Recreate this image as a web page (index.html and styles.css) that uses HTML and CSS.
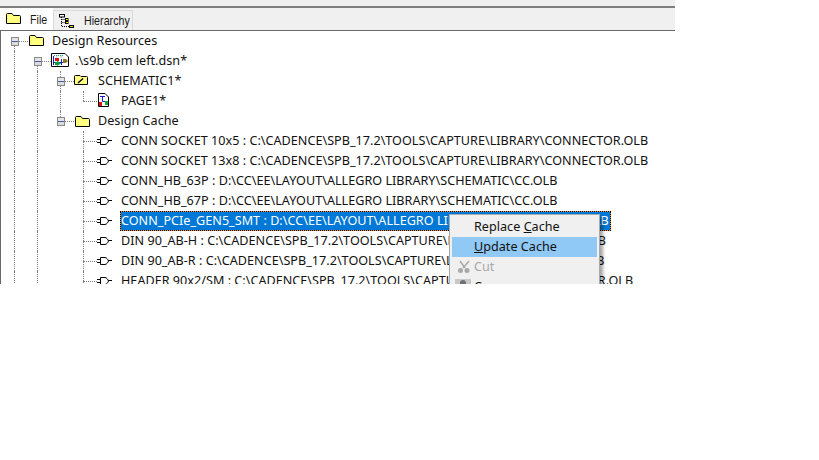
FILE: index.html
```html
<!DOCTYPE html>
<html>
<head>
<meta charset="utf-8">
<title>Design Resources</title>
<link rel="stylesheet" href="styles.css">
</head>
<body>
<svg class="defs" width="0" height="0" aria-hidden="true">
  <defs>
    <symbol id="folder" viewBox="0 0 15 11">
      <path d="M1.500 .500H6L7.500 2.500H13.500Q14.500 2.500 14.500 3.500V10.500H.500V1.500Q.500 .500 1.500 .500Z" fill="#ffff80" stroke="#000"/>
    </symbol>
    <symbol id="gate" viewBox="0 0 15 8">
      <path d="M3.500 .500H8C9.500 .500 11 2.500 11.500 4C11 5.500 9.500 7.500 8 7.500H3.500Z" fill="#fff" stroke="#000"/>
      <path d="M0 2.500H3.500M0 5.500H3.500M11.500 3.500H15" stroke="#000"/>
    </symbol>
  </defs>
</svg>
<div class="app">
  <div class="topstrip"></div>
  <div class="tabs">
    <div class="tab active">
      <svg class="tabicon tabfolder" width="15" height="11"><use href="#folder"/></svg>
      <span class="tablabel">File</span>
    </div>
    <div class="tab">
      <svg class="tabicon" width="15" height="14" viewBox="0 0 15 14">
        <path d="M2.500 3V12.500H10M2.500 5.500H6M2.500 8.500H6" fill="none" stroke="#000" stroke-dasharray="1 1"/>
        <rect x=".5" y=".5" width="5" height="2.500" fill="#fff" stroke="#000"/>
        <rect x="6.500" y="4.500" width="2.500" height="2" fill="#ffe000" stroke="#000"/>
        <rect x="6.500" y="7.500" width="2.500" height="2" fill="#ffe000" stroke="#000"/>
        <rect x="10.500" y="11.500" width="4" height="2" fill="#ffe000" stroke="#000"/>
      </svg>
      <span class="tablabel">Hierarchy</span>
    </div>
  </div>
  <div class="tree">
    <div class="row">
      <div class="c bot h"><i class="box"></i></div>
      <svg class="ic ic-folder" width="15" height="11"><use href="#folder"/></svg>
      <span class="t t1">Design Resources</span>
    </div>
    <div class="row">
      <div class="c v"></div>
      <div class="c bot h"><i class="box"></i></div>
      <svg class="ic ic-dsn" width="18" height="14" viewBox="0 0 18 14">
        <path d="M.500 .500H14L17.500 4V13.500H.500Z" fill="#fff" stroke="#000"/>
        <path d="M3 2.500H12M6 2.500V5M10 2.500V5" stroke="#2a9d8a" stroke-dasharray="1 1"/>
        <path d="M2.500 3V12M10.500 6V12M2 9.500H15" stroke="#1818d8" fill="none"/>
        <rect x="4" y="5" width="4" height="3" fill="#e01010"/>
        <path d="M4 9H6V7.500L10 10.500L6 13V12H4Z" fill="#10a030"/>
        <path d="M12 6H15L17 8L15 10H12Z" fill="#8a7a20"/>
      </svg>
      <span class="t t2">.\s9b cem left.dsn*</span>
    </div>
    <div class="row">
      <div class="c v"></div>
      <div class="c v"></div>
      <div class="c v h"><i class="box"></i></div>
      <svg class="ic ic-sch" width="14" height="10" viewBox="0 0 14 10">
        <path d="M1.500 .500H6L7 1.500H12.500Q13.500 1.500 13.500 2.500V9.500H.500V1.500Q.500 .500 1.500 .500Z" fill="#ffff80" stroke="#000"/>
        <path d="M4 8L9 3.500" stroke="#000" stroke-width="1.400"/>
      </svg>
      <span class="t t3">SCHEMATIC1*</span>
    </div>
    <div class="row">
      <div class="c v"></div>
      <div class="c v"></div>
      <div class="c v"></div>
      <div class="c top h"></div>
      <svg class="ic ic-page" width="11" height="14" viewBox="0 0 11 14">
        <path d="M.500 .500H7L10.500 4V13.500H.500Z" fill="#fff" stroke="#000"/>
        <path d="M2 3.500H7M4.500 3.500V8.500H8" fill="none" stroke="#1818d8"/>
        <rect x="1" y="9" width="3" height="4" fill="#e01010"/>
        <rect x="7" y="8" width="3" height="4" fill="#10b030"/>
      </svg>
      <span class="t t4">PAGE1*</span>
    </div>
    <div class="row">
      <div class="c v"></div>
      <div class="c v"></div>
      <div class="c top h"><i class="box"></i></div>
      <svg class="ic ic-cache" width="15" height="11"><use href="#folder"/></svg>
      <span class="t t5">Design Cache</span>
    </div>
    <div class="row"><div class="c v"></div><div class="c v"></div><div class="c"></div><div class="c v h"></div><svg class="ic ic-gate" width="15" height="8"><use href="#gate"/></svg><span class="t t6">CONN SOCKET 10x5 : C:\CADENCE\SPB_17.2\TOOLS\CAPTURE\LIBRARY\CONNECTOR.OLB</span></div>
    <div class="row"><div class="c v"></div><div class="c v"></div><div class="c"></div><div class="c v h"></div><svg class="ic ic-gate" width="15" height="8"><use href="#gate"/></svg><span class="t t6">CONN SOCKET 13x8 : C:\CADENCE\SPB_17.2\TOOLS\CAPTURE\LIBRARY\CONNECTOR.OLB</span></div>
    <div class="row"><div class="c v"></div><div class="c v"></div><div class="c"></div><div class="c v h"></div><svg class="ic ic-gate" width="15" height="8"><use href="#gate"/></svg><span class="t t6">CONN_HB_63P : D:\CC\EE\LAYOUT\ALLEGRO LIBRARY\SCHEMATIC\CC.OLB</span></div>
    <div class="row"><div class="c v"></div><div class="c v"></div><div class="c"></div><div class="c v h"></div><svg class="ic ic-gate" width="15" height="8"><use href="#gate"/></svg><span class="t t6">CONN_HB_67P : D:\CC\EE\LAYOUT\ALLEGRO LIBRARY\SCHEMATIC\CC.OLB</span></div>
    <div class="row"><div class="c v"></div><div class="c v"></div><div class="c"></div><div class="c v h"></div><svg class="ic ic-gate" width="15" height="8"><use href="#gate"/></svg><span class="t t6 sel">CONN_PCIe_GEN5_SMT : D:\CC\EE\LAYOUT\ALLEGRO LIBRARY\SCHEMATIC\CC.OLB</span></div>
    <div class="row"><div class="c v"></div><div class="c v"></div><div class="c"></div><div class="c v h"></div><svg class="ic ic-gate" width="15" height="8"><use href="#gate"/></svg><span class="t t6">DIN 90_AB-H : C:\CADENCE\SPB_17.2\TOOLS\CAPTURE\LIBRARY\CONNECTOR.OLB</span></div>
    <div class="row"><div class="c v"></div><div class="c v"></div><div class="c"></div><div class="c v h"></div><svg class="ic ic-gate" width="15" height="8"><use href="#gate"/></svg><span class="t t6">DIN 90_AB-R : C:\CADENCE\SPB_17.2\TOOLS\CAPTURE\LIBRARY\CONNECTOR.OLB</span></div>
    <div class="row"><div class="c v"></div><div class="c v"></div><div class="c"></div><div class="c v h"></div><svg class="ic ic-gate" width="15" height="8"><use href="#gate"/></svg><span class="t t6">HEADER 90x2/SM : C:\CADENCE\SPB_17.2\TOOLS\CAPTURE\LIBRARY\CONNECTOR.OLB</span></div>
  </div>
  <div class="menu">
    <div class="item"><span class="label">Replace <u>C</u>ache</span></div>
    <div class="item hot"><span class="label"><u>U</u>pdate Cache</span></div>
    <div class="item off">
      <svg class="micon" width="14" height="14" viewBox="0 0 14 14">
        <path d="M3 1L8 8M12 1L6 8" stroke="#a8a8a8" stroke-width="1.500"/>
        <circle cx="3.500" cy="10.500" r="2.500" fill="#a8a8a8"/>
        <circle cx="10" cy="10.500" r="2.500" fill="#a8a8a8"/>
      </svg>
      <span class="label">Cut</span>
    </div>
    <div class="item">
      <span class="mbadge"><i class="mglyph"></i></span>
      <span class="label">Copy</span>
    </div>
  </div>
</div>
</body>
</html>
```
FILE: styles.css
```css
html, body {
  margin: 0;
  padding: 0;
  background: #fff;
}
.defs {
  display: block;
  height: 0;
}
.app {
  position: relative;
  width: 675px;
  height: 284px;
  overflow: hidden;
  background: #fff;
  font-family: "Noto Sans", sans-serif;
  font-size: 12.6px;
  letter-spacing: .025px;
  color: #000;
}
.topstrip {
  height: 6px;
  background: #f0f0f0;
  border-bottom: 2px solid #808080;
}
.tabs {
  display: flex;
  align-items: flex-end;
  height: 22px;
  background: #f0f0f0;
  border-bottom: 1px solid #696969;
  font-family: "Liberation Sans", sans-serif;
  font-size: 13px;
}
.tab {
  display: flex;
  align-items: center;
  height: 20px;
  width: 80px;
  box-sizing: border-box;
  padding-left: 5px;
  gap: 10px;
  border: 1px solid #d9d9d9;
  border-bottom: none;
  color: #1a1a1a;
}
.tab.active {
  width: 53px;
  height: 22px;
  padding-left: 6px;
  gap: 9px;
  background: #fff;
  border: none;
}
.tabicon { flex: none; }
.tabfolder { margin-bottom: 1px; }
.tablabel {
  flex: none;
  display: inline-block;
  width: 10px;
  white-space: nowrap;
  transform: scaleX(.82);
  transform-origin: left center;
}
.tree {
  border-left: 1px solid #696969;
  padding-left: 13px;
  height: 253px;
}
.row {
  display: flex;
  align-items: center;
  height: 20px;
  white-space: nowrap;
}
.c {
  position: relative;
  flex: none;
  width: 23px;
  height: 20px;
}
.c::before,
.c::after {
  content: none;
  position: absolute;
}
.v::before,
.top::before,
.bot::before {
  content: "";
  left: 0;
  border-left: 1px dotted #808080;
}
.v::before { top: 0; bottom: 0; }
.top::before { top: 0; height: 10px; }
.bot::before { top: 10px; bottom: 0; }
.h::after {
  content: "";
  left: 0;
  top: 10px;
  width: 14px;
  border-top: 1px dotted #808080;
}
.box {
  position: absolute;
  z-index: 1;
  left: -3px;
  top: 6px;
  width: 6px;
  height: 7px;
  background: linear-gradient(#e4e4e4 0 3px, #4a5aa8 3px 4px, #dcdcdc 4px);
  border: 1px solid #8a8a8a;
}
.ic { flex: none; }
.ic-folder { margin: 0 0 1px -8px; }
.ic-dsn { margin: -2px 0 0 -9px; }
.ic-sch { margin: -2px 0 0 -9px; }
.ic-page { margin: -2px 0 0 -8px; }
.ic-cache { margin: 1px 0 0 -8px; }
.ic-gate { margin-left: -9px; }
.t {
  color: #111;
  line-height: 20px;
}
.t1 { margin-left: 8px; }
.t2 { margin-left: 6px; }
.t3 { margin-left: 10px; }
.t4 { margin-left: 12px; }
.t5 { margin-left: 8px; }
.t6 { margin-left: 9px; }
.sel {
  margin-left: 8px;
  padding: 0 1px;
  width: 489px;
  box-sizing: content-box;
  background: #0078d7;
  color: #fff;
  box-shadow: inset 0 0 0 1px #e8912a;
  outline: 1px dotted #000;
  outline-offset: -1px;
}
.menu {
  position: absolute;
  left: 449px;
  top: 214px;
  width: 145px;
  padding: 2px;
  background: #f0f0f0;
  border: 1px solid #a8a8a8;
  box-shadow: 3px 3px 3px rgba(0, 0, 0, .35);
}
.item {
  position: relative;
  height: 20px;
  line-height: 20px;
  padding-left: 22px;
  color: #111;
}
.hot { background: #90c8f6; }
.off { color: #a8a8a8; }
.micon {
  position: absolute;
  left: 5px;
  top: 3px;
}
.mbadge {
  position: absolute;
  left: 3px;
  top: 2px;
  width: 16px;
  height: 16px;
  background: #c8c8c8;
}
.mglyph {
  position: absolute;
  left: 5px;
  top: 1px;
  width: 6px;
  height: 6px;
  background: #707070;
  border-radius: 3px;
}
```
